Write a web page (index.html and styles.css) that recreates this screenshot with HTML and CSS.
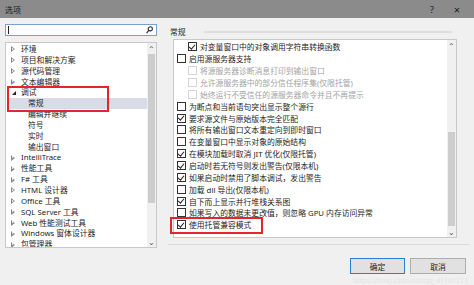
FILE: index.html
```html
<!DOCTYPE html>
<html lang="zh-CN">
<head>
    <meta charset="UTF-8">
    <title>选项</title>
    <link rel="stylesheet" href="styles.css">
</head>
<body>
    <div class="titlebar">
        <span class="title">选项</span>
        <span class="tb-btn help">?</span>
        <span class="tb-btn close">×</span>
    </div>
    <div class="main">
        <div class="left">
            <div class="search">
                <span class="caret"></span>
                <svg class="magnifier" width="7" height="8" viewBox="0 0 7 8">
                    <circle cx="4.3" cy="2.8" r="2.1" fill="none" stroke="#333" stroke-width="1.1"/>
                    <path d="M2.8 4.3 L0.6 7.2" stroke="#333" stroke-width="1.3"/>
                </svg>
            </div>
            <div class="tree">
                <div class="tree-items">
                    <div class="node"><span class="arrow"></span>环境</div>
                    <div class="node"><span class="arrow"></span>项目和解决方案</div>
                    <div class="node"><span class="arrow"></span>源代码管理</div>
                    <div class="node"><span class="arrow"></span>文本编辑器</div>
                    <div class="node"><span class="arrow open"></span>调试</div>
                    <div class="node child selected">常规</div>
                    <div class="node child">编辑并继续</div>
                    <div class="node child">符号</div>
                    <div class="node child">实时</div>
                    <div class="node child">输出窗口</div>
                    <div class="node"><span class="arrow"></span>IntelliTrace</div>
                    <div class="node"><span class="arrow"></span>性能工具</div>
                    <div class="node"><span class="arrow"></span>F# 工具</div>
                    <div class="node"><span class="arrow"></span>HTML 设计器</div>
                    <div class="node"><span class="arrow"></span>Office 工具</div>
                    <div class="node"><span class="arrow"></span>SQL Server 工具</div>
                    <div class="node"><span class="arrow"></span>Web 性能测试工具</div>
                    <div class="node"><span class="arrow"></span>Windows 窗体设计器</div>
                    <div class="node"><span class="arrow"></span>包管理器</div>
                </div>
                <div class="scrollbar tree-sb">
                    <div class="sb-up">&#8963;</div>
                    <div class="sb-thumb"></div>
                    <div class="sb-track"></div>
                    <div class="sb-down">&#8964;</div>
                </div>
            </div>
        </div>
        <div class="right">
            <div class="section-head">
                <span>常规</span>
                <div class="head-line"></div>
            </div>
            <div class="options">
                <div class="option-items">
                    <div class="opt sub"><span class="cb checked"></span>对变量窗口中的对象调用字符串转换函数</div>
                    <div class="opt"><span class="cb"></span>启用源服务器支持</div>
                    <div class="opt sub disabled"><span class="cb"></span>将源服务器诊断消息打印到输出窗口</div>
                    <div class="opt sub disabled"><span class="cb"></span>允许源服务器中的部分信任程序集(仅限托管)</div>
                    <div class="opt sub disabled"><span class="cb"></span>始终运行不受信任的源服务器命令并且不再提示</div>
                    <div class="opt"><span class="cb"></span>为断点和当前语句突出显示整个源行</div>
                    <div class="opt"><span class="cb checked"></span>要求源文件与原始版本完全匹配</div>
                    <div class="opt"><span class="cb"></span>将所有输出窗口文本重定向到即时窗口</div>
                    <div class="opt"><span class="cb"></span>在变量窗口中显示对象的原始结构</div>
                    <div class="opt"><span class="cb checked"></span>在模块加载时取消 JIT 优化(仅限托管)</div>
                    <div class="opt"><span class="cb checked"></span>启动时若无符号则发出警告(仅限本机)</div>
                    <div class="opt"><span class="cb checked"></span>如果启动时禁用了脚本调试，发出警告</div>
                    <div class="opt"><span class="cb"></span>加载 dll 导出(仅限本机)</div>
                    <div class="opt"><span class="cb checked"></span>自下而上显示并行堆栈关系图</div>
                    <div class="opt"><span class="cb"></span>如果写入的数据未更改值，则忽略 GPU 内存访问异常</div>
                    <div class="opt"><span class="cb checked"></span>使用托管兼容模式</div>
                </div>
                <div class="scrollbar list-sb">
                    <div class="sb-up">&#8963;</div>
                    <div class="sb-track top"></div>
                    <div class="sb-thumb"></div>
                    <div class="sb-down">&#8964;</div>
                </div>
            </div>
            <div class="separator"></div>
        </div>
    </div>
    <div class="buttons">
        <button class="btn default">确定</button>
        <button class="btn">取消</button>
    </div>
    <div class="watermark">https://blog.csdn.net/qq_41101213</div>

    <!-- highlight frames drawn over the screenshot -->
    <div class="mark mark-tree"></div>
    <div class="mark mark-option"></div>
</body>
</html>
```

FILE: styles.css
```css
body {
    margin: 0;
    width: 474px;
    height: 285px;
    overflow: hidden;
    position: relative;
    background-color: #f0f0f0;
    font-family: "Noto Sans", "Noto Sans CJK SC", sans-serif;
    font-size: 7.8px;
    color: #1e1e1e;
}
.titlebar {
    height: 18px;
    display: flex;
    align-items: center;
    padding: 0 5px;
    background-color: #8b8b8b;
    color: #1a1a1a;
}
.title {
    flex: 1;
    font-size: 8px;
}
.tb-btn {
    font-size: 9px;
    width: 30px;
    text-align: center;
}
.close {
    font-size: 11px;
    width: 20px;
    margin-right: 2px;
}
.main {
    display: flex;
    padding: 6px 0 0 5px;
}
.left {
    width: 152px;
    display: flex;
    flex-direction: column;
}
.search {
    height: 12px;
    border: 1px solid #7a9fd4;
    background-color: white;
    display: flex;
    align-items: center;
    justify-content: space-between;
    padding: 0 3px 0 2px;
    box-sizing: border-box;
}
.caret {
    width: 1px;
    height: 8px;
    background-color: #222;
}
.tree {
    margin-top: 6px;
    height: 206px;
    border: 1px solid #c8c8c8;
    background-color: white;
    box-sizing: border-box;
    display: flex;
}
.tree-items {
    flex: 1;
    padding: 1px 0 0 2px;
    overflow: hidden;
}
.node {
    height: 10.85px;
    line-height: 10.85px;
    white-space: nowrap;
    display: flex;
    align-items: center;
    padding-left: 3px;
}
.node.child {
    padding-left: 20px;
}
.node.selected {
    background-color: #d9dbe7;
}
.arrow {
    width: 0;
    height: 0;
    border-top: 3px solid transparent;
    border-bottom: 3px solid transparent;
    border-left: 4px solid #8a8a8a;
    margin-right: 6px;
    position: relative;
}
.arrow::after {
    content: "";
    position: absolute;
    left: -3.2px;
    top: -1.6px;
    border-top: 1.6px solid transparent;
    border-bottom: 1.6px solid transparent;
    border-left: 2.2px solid white;
}
.arrow.open {
    border: none;
    border-left: 4px solid transparent;
    border-bottom: 4px solid #222;
    margin-left: 1px;
    margin-right: 5px;
}
.arrow.open::after {
    display: none;
}
.scrollbar {
    width: 9px;
    display: flex;
    flex-direction: column;
    background-color: #f0f0f0;
    color: #555;
    font-size: 8px;
}
.sb-up, .sb-down {
    height: 11px;
    line-height: 11px;
    text-align: center;
}
.sb-thumb {
    background-color: #cdcdcd;
    margin: 0 1px;
}
.tree-sb .sb-thumb {
    height: 149px;
}
.sb-track {
    flex: 1;
}
.list-sb .sb-track.top {
    flex: none;
    height: 81px;
}
.list-sb .sb-thumb {
    flex: 1;
}
.right {
    width: 300px;
    margin-left: 13px;
    display: flex;
    flex-direction: column;
}
.section-head {
    height: 15px;
    display: flex;
    align-items: center;
}
.head-line {
    flex: 1;
    height: 2px;
    background-color: #dedede;
    margin: 0 18px;
}
.options {
    margin: 0 13px 0 3px;
    height: 199px;
    border: 1px solid #c8c8c8;
    background-color: white;
    box-sizing: border-box;
    display: flex;
}
.option-items {
    flex: 1;
    padding: 1px 0 0 3px;
    overflow: hidden;
}
.opt {
    height: 11.87px;
    display: flex;
    align-items: center;
    white-space: nowrap;
}
.opt.sub {
    padding-left: 11px;
}
.opt.disabled {
    color: #a3a3a3;
}
.cb {
    width: 9px;
    height: 9px;
    border: 1px solid #333;
    box-sizing: border-box;
    margin-right: 3px;
    background-color: white;
    position: relative;
    flex: none;
}
.disabled .cb {
    border-color: #d6d6d6;
}
.cb.checked::after {
    content: "";
    position: absolute;
    left: 1.4px;
    top: -0.2px;
    width: 2.6px;
    height: 5px;
    border-right: 1.1px solid #222;
    border-bottom: 1.1px solid #222;
    transform: rotate(40deg);
}
.separator {
    height: 1px;
    background-color: #dcdcdc;
    margin: 6px 0 0 -2px;
}
.buttons {
    display: flex;
    justify-content: flex-end;
    gap: 5px;
    margin-top: 10px;
    padding-right: 8px;
}
.btn {
    width: 56px;
    height: 16px;
    padding: 0;
    font-family: "Noto Sans", "Noto Sans CJK SC", sans-serif;
    font-size: 7.8px;
    color: #1e1e1e;
    background-color: #e1e1e1;
    border: 1px solid #adadad;
}
.btn.default {
    width: 55px;
    border-color: #2a7fd4;
}
.watermark {
    position: absolute;
    right: 6px;
    bottom: 0;
    font-size: 7px;
    color: #e4e4e4;
}
.mark {
    position: absolute;
    border: 2.5px solid #e4262c;
    box-sizing: border-box;
}
.mark-tree {
    left: 7px;
    top: 86px;
    width: 102px;
    height: 26px;
}
.mark-option {
    left: 170px;
    top: 217px;
    width: 93px;
    height: 17px;
}
```
